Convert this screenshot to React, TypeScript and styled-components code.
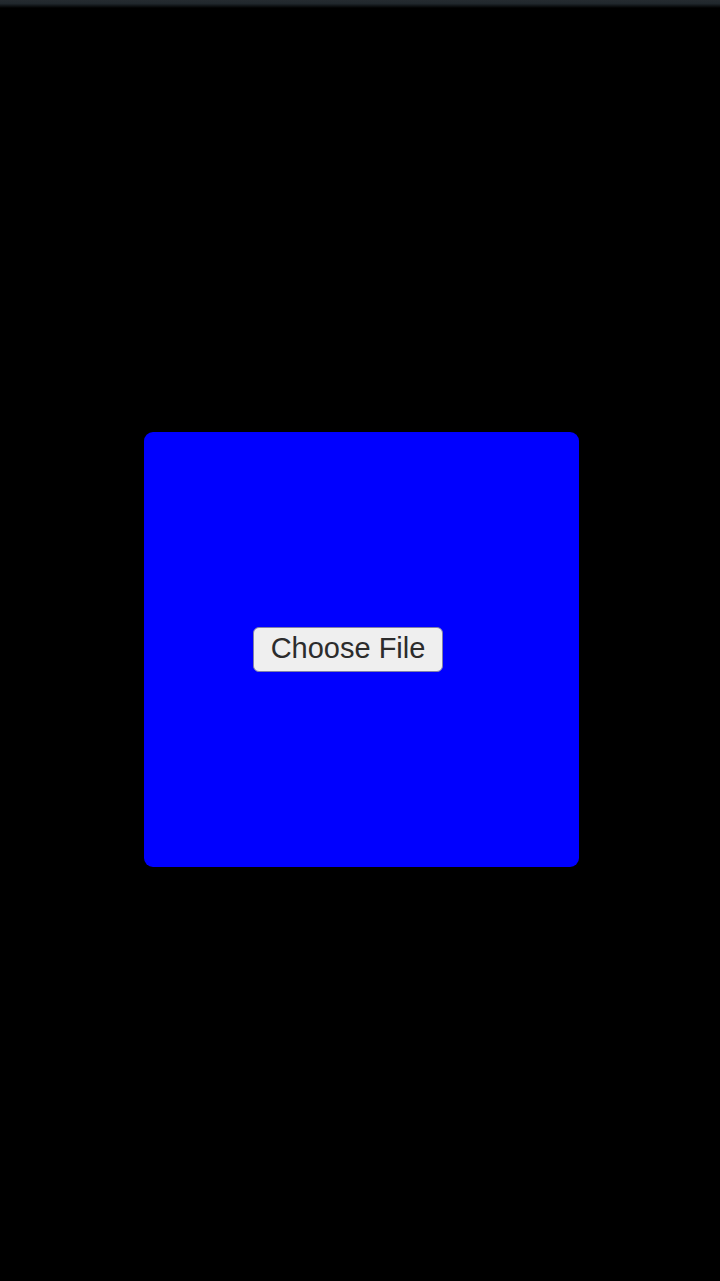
import React from 'react';
import styled, { createGlobalStyle } from 'styled-components';

const GlobalStyle = createGlobalStyle`
  body {
    margin: 0;
    background: #000;
    font-family: "Liberation Sans", Arial, sans-serif;
  }
`;

const Page = styled.div`
  min-height: 100vh;
  box-sizing: border-box;
  display: flex;
  flex-direction: column;
`;

const TopBar = styled.header`
  height: 8px;
  background: linear-gradient(#252b30, #20272c 45%, #000);
`;

const Stage = styled.main`
  flex: 1;
  display: flex;
  align-items: center;
  justify-content: center;
  padding: 10px 0 0 2px;
`;

const Card = styled.section`
  width: 435px;
  max-width: 100%;
  aspect-ratio: 1;
  box-sizing: border-box;
  display: flex;
  align-items: center;
  justify-content: center;
  padding-right: 26px;
  border-radius: 9px;
  background: #00f;
`;

const FileInput = styled.input`
  width: 190px;
  height: 46px;
  overflow: hidden;
  color: transparent;
  font-size: 29px;

  &::file-selector-button {
    box-sizing: border-box;
    width: 190px;
    height: 45px;
    margin: 0;
    padding: 0 0 1px;
    border: 1px solid #8080a8;
    border-radius: 6px;
    background: #efefef;
    color: #2c2c2c;
    font-family: inherit;
    font-size: 29px;
  }
`;

export default function App() {
  return (
    <>
      <GlobalStyle />
      <Page>
        <TopBar />
        <Stage>
          <Card>
            <FileInput type="file" aria-label="Choose File" />
          </Card>
        </Stage>
      </Page>
    </>
  );
}
